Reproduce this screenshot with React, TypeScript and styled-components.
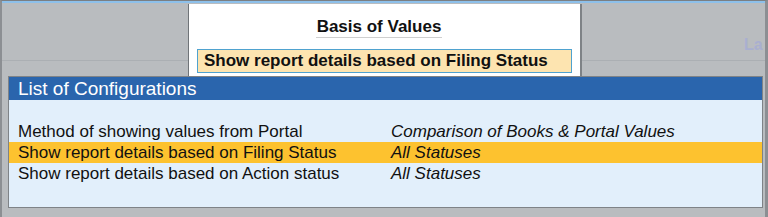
import React from "react";
import styled, { createGlobalStyle } from "styled-components";

const Global = createGlobalStyle`
  html, body { margin: 0; padding: 0; }
  body { font-family: "Liberation Sans", Arial, sans-serif; }
  * { box-sizing: border-box; }
`;

const Frame = styled.div`
  width: 768px;
  height: 217px;
  overflow: hidden;
  display: flex;
  flex-direction: column;
  background:
    linear-gradient(to bottom, transparent 59px, #abafb3 59px, #abafb3 60px, transparent 60px),
    #b9bcbf;
  border-top: 1px solid #7b7f83;
  border-left: 2px solid #8c8f93;
  border-right: 3px solid #8c8f93;
`;

const TopStripe = styled.div`
  height: 2px;
  flex: none;
  background: #8dc0ea;
`;

const TopRow = styled.div`
  display: flex;
  height: 73px;
  padding-top: 1px;
  flex: none;
`;

const Gap = styled.div`
  width: 186px;
  flex: none;
`;

const Dialog = styled.div`
  width: 394px;
  flex: none;
  background: #ffffff;
  border-left: 1px solid #707478;
  border-right: 2px solid #7e8286;
  display: flex;
  flex-direction: column;
  align-items: center;
`;

const Title = styled.div`
  margin-top: 12px;
  padding-right: 11px;
  line-height: 21px;
  font-size: 17px;
  font-weight: 700;
  color: #111;
`;

const TitleText = styled.span`
  display: inline-block;
  border-bottom: 1px solid #cfcfcf;
  padding: 0 1px;
`;

const Field = styled.div`
  align-self: stretch;
  margin: 11px 8px 0 8px;
  height: 24px;
  border: 1px solid #4fa2cf;
  background: #fde4b0;
  padding-left: 6px;
  line-height: 22px;
  font-size: 17px;
  font-weight: 700;
  color: #111;
  white-space: nowrap;
`;

const Ghost = styled.div`
  flex: 1;
  padding: 32px 0 0 162px;
  font-size: 16px;
  font-weight: 700;
  color: #a9afd0;
  white-space: nowrap;
`;

const Panel = styled.div`
  margin-left: 6px;
  width: 755px;
  height: 132px;
  flex: none;
  border: 1px solid #7f8387;
  display: flex;
  flex-direction: column;
`;

const PanelHeader = styled.div`
  height: 23px;
  line-height: 23px;
  padding-left: 9px;
  background: #2a65ad;
  color: #ffffff;
  font-size: 19px;
`;

const PanelBody = styled.div`
  flex: 1;
  background: #e2effb;
  padding-top: 21px;
`;

const Row = styled.div<{ $active?: boolean }>`
  display: grid;
  grid-template-columns: 373px 1fr;
  padding-left: 9px;
  height: 21px;
  line-height: 21px;
  font-size: 17px;
  color: #111;
  background: ${(p) => (p.$active ? "#fdc22f" : "transparent")};
  white-space: nowrap;
`;

const Value = styled.span`
  font-style: italic;
`;

const rows = [
  { label: "Method of showing values from Portal", value: "Comparison of Books & Portal Values" },
  { label: "Show report details based on Filing Status", value: "All Statuses", active: true },
  { label: "Show report details based on Action status", value: "All Statuses" },
];

export default function App() {
  return (
    <>
      <Global />
      <Frame>
        <TopStripe />
        <TopRow>
          <Gap />
          <Dialog>
            <Title>
              <TitleText>Basis of Values</TitleText>
            </Title>
            <Field>Show report details based on Filing Status</Field>
          </Dialog>
          <Ghost>La</Ghost>
        </TopRow>
        <Panel>
          <PanelHeader>List of Configurations</PanelHeader>
          <PanelBody>
            {rows.map((r) => (
              <Row key={r.label} $active={r.active}>
                <span>{r.label}</span>
                <Value>{r.value}</Value>
              </Row>
            ))}
          </PanelBody>
        </Panel>
      </Frame>
    </>
  );
}
